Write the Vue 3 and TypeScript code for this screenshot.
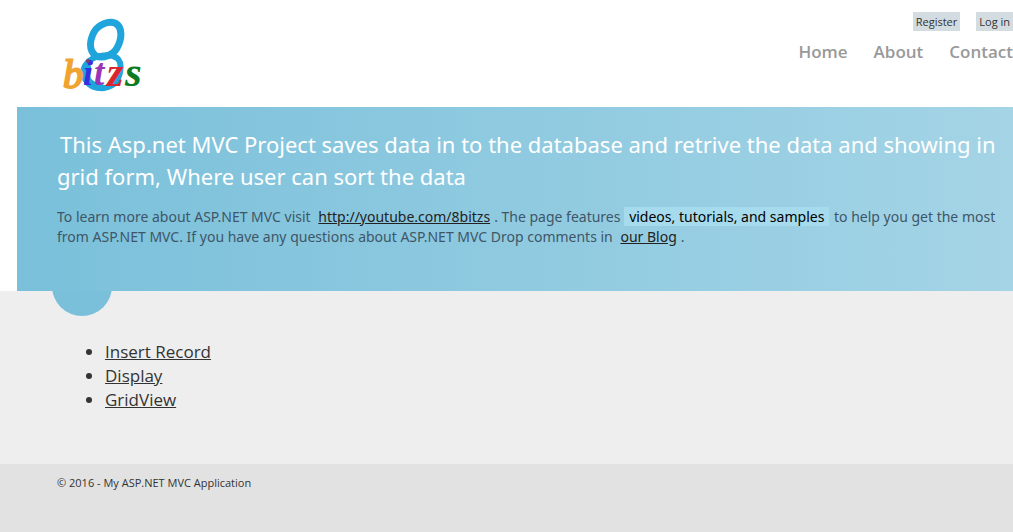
<script setup lang="ts">
interface NavLink {
  label: string
  href: string
}

const navLinks: NavLink[] = [
  { label: 'Home', href: '#home' },
  { label: 'About', href: '#about' },
  { label: 'Contact', href: '#contact' },
]

const accountLinks: NavLink[] = [
  { label: 'Register', href: '#register' },
  { label: 'Log in', href: '#login' },
]

const recordLinks: NavLink[] = [
  { label: 'Insert Record', href: '#insert' },
  { label: 'Display', href: '#display' },
  { label: 'GridView', href: '#gridview' },
]
</script>

<template>
  <div class="page">
    <header class="header">
      <a class="logo" href="#home" aria-label="8bitzs">
        <svg width="84" height="78" viewBox="12 7 84 78">
          <g fill="none" stroke="#1fa4dc" stroke-linecap="round" stroke-linejoin="round">
            <path stroke-width="7" d="M46 46C38 40 40 30 44 22C49 14 58 11 65 13C73 17 72 29 67 38C63 45 53 49 46 46Z" />
            <path stroke-width="6" d="M46 47C36 51 30 60 35 69C40 79 55 81 64 74C71 67 73 53 67 48C61 44 53 45 46 47" />
            <path stroke-width="8" d="M37 58C33 67 38 76 50 77" />
          </g>
          <g class="logo-letters">
            <text class="thin" x="13" y="78" font-size="40" fill="#f0a330" stroke="#f0a330">b</text>
            <text x="33" y="75" font-size="36" fill="#3a2be0">i</text>
            <text x="44" y="75" font-size="37" fill="#9b35b5">t</text>
            <text x="57" y="76" font-size="42" fill="#d8262f">z</text>
            <text x="75" y="76" font-size="43" fill="#0c7b22">s</text>
          </g>
          <circle cx="38" cy="51" r="2" fill="#8a3a6a" />
        </svg>
      </a>
      <div class="header-links">
        <nav class="account" aria-label="Account">
          <a v-for="link in accountLinks" :key="link.label" :href="link.href">{{ link.label }}</a>
        </nav>
        <nav class="menu" aria-label="Main">
          <a v-for="link in navLinks" :key="link.label" :href="link.href">{{ link.label }}</a>
        </nav>
      </div>
    </header>

    <div class="banner">
      <section class="featured">
        <h1>
          <span class="lead">This Asp.net MVC Project saves data in to the database and retrive the data and showing in</span><br />
          grid form, Where user can sort the data
        </h1>
        <p>
          To learn more about ASP.NET MVC visit
          <a href="#youtube">http://youtube.com/8bitzs</a>. The page features
          <mark>videos, tutorials, and samples</mark> to help you get the most<br />
          from ASP.NET MVC. If you have any questions about ASP.NET MVC Drop comments in
          <a href="#blog">our Blog</a>.
        </p>
      </section>
    </div>

    <main class="content">
      <ul>
        <li v-for="link in recordLinks" :key="link.label">
          <a :href="link.href">{{ link.label }}</a>
        </li>
      </ul>
    </main>

    <footer class="footer">
      <p>© 2016 - My ASP.NET MVC Application</p>
    </footer>
  </div>
</template>

<style>
body {
  margin: 0;
  background: #e2e2e2;
}
</style>

<style scoped>
.page {
  min-height: 100vh;
  overflow: hidden;
  font-family: "Open Sans", "Noto Sans", sans-serif;
  color: #333;
  background: #e2e2e2;
}

.header {
  display: flex;
  justify-content: space-between;
  height: 107px;
  background: #fff;
}

.logo {
  margin: 17px 0 0 62px;
}

.logo svg {
  display: block;
  overflow: visible;
}

.logo-letters {
  font-family: "Liberation Serif", serif;
  font-style: italic;
  font-weight: 700;
}

.logo-letters .thin {
  font-weight: 400;
  stroke-width: 2px;
}

.header-links {
  display: flex;
  flex-direction: column;
  align-items: flex-end;
}

.account {
  display: flex;
  gap: 16px;
  margin-top: 12px;
}

.account a {
  padding: 0 3px;
  font-size: 11px;
  line-height: 19px;
  color: #333;
  text-decoration: none;
  background: #d3dce0;
}

.menu {
  display: flex;
  gap: 26px;
  margin-top: 8px;
}

.menu a {
  font-size: 17px;
  font-weight: 600;
  line-height: 25px;
  color: #999;
  text-decoration: none;
}

.banner {
  padding-left: 17px;
  background: #fff;
}

.featured {
  position: relative;
  padding: 21px 0 44px 40px;
  font-family: "Noto Sans", "Open Sans", sans-serif;
  white-space: nowrap;
  background: linear-gradient(to right, #7ac0da, #a4d4e6);
}

.featured::after {
  position: absolute;
  bottom: -25px;
  left: 35px;
  width: 60px;
  height: 60px;
  clip-path: inset(35px 0 0);
  content: "";
  background: #7ac0da;
  border-radius: 50%;
}

.featured h1 {
  margin: 0;
  font-size: 22px;
  font-weight: 400;
  line-height: 32px;
  color: #fff;
}

.lead {
  padding-left: 3px;
}

.featured p {
  margin: 15px 0 0;
  font-size: 14px;
  line-height: 20px;
  color: #3e5667;
}

.featured p a {
  margin: 0 4px;
  color: #222;
}

.featured mark {
  padding: 0 5px;
  margin-right: 1px;
  color: #000;
  background: #a6dbed;
}

.content {
  padding: 49px 57px 52px;
  background: #eee;
}

.content ul {
  padding-left: 48px;
  margin: 0;
}

.content li {
  font-size: 17px;
  line-height: 24px;
}

.content a {
  color: #333;
}

.footer {
  padding: 10px 57px;
}

.footer p {
  margin: 0;
  font-size: 11px;
  line-height: 18px;
}
</style>
